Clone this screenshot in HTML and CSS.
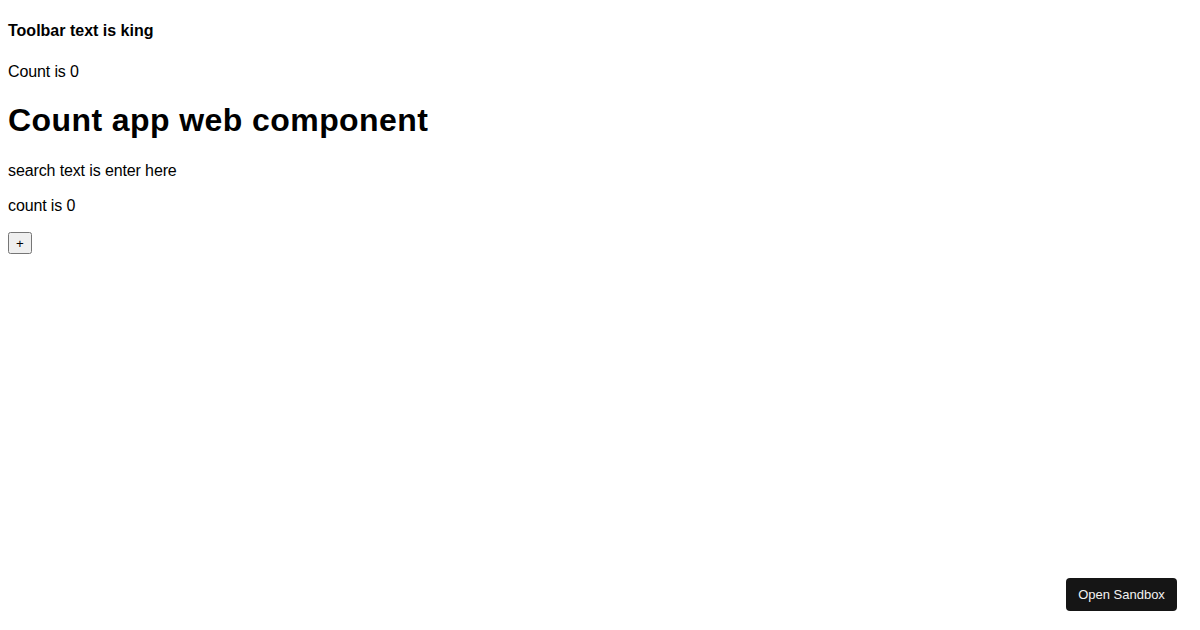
FILE: index.html
```html
<!DOCTYPE html>
<html>
<head>
<meta charset="utf-8">
<link rel="stylesheet" href="styles.css">
</head>
<body>
<div class="page">
  <h4 class="toolbar">Toolbar text is king</h4>
  <p class="line count-top">Count is 0</p>
  <div class="app">
    <h1 class="title">Count app web component</h1>
    <p class="line search">search text is enter here</p>
    <p class="line count">count is 0</p>
    <button class="inc">+</button>
  </div>
</div>
<a class="sandbox">Open Sandbox</a>
</body>
</html>
```
FILE: styles.css
```css
html, body {
  margin: 0;
  padding: 0;
  background: #fff;
}
body {
  font-family: "Liberation Sans", Arial, sans-serif;
  color: #000;
}
.page {
  display: flex;
  flex-direction: column;
  align-items: flex-start;
  padding: 22px 8px 0;
}
.app {
  display: flex;
  flex-direction: column;
  align-items: flex-start;
}
.toolbar {
  font-size: 16px;
  font-weight: bold;
  margin: 0;
}
.line {
  font-size: 16px;
  letter-spacing: -0.12px;
  margin: 0;
}
.count-top {
  margin-top: 22.5px;
}
.title {
  font-size: 32px;
  font-weight: bold;
  letter-spacing: 0.42px;
  margin: 21.4px 0 0;
}
.search {
  margin-top: 23.6px;
}
.count {
  margin-top: 16.6px;
}
.inc {
  font-family: "Liberation Sans", Arial, sans-serif;
  font-size: 13.33px;
  margin-top: 17px;
  height: 22px;
}
.sandbox {
  position: fixed;
  right: 23px;
  bottom: 19px;
  width: 111px;
  height: 33px;
  box-sizing: border-box;
  display: flex;
  align-items: center;
  justify-content: center;
  background: #151515;
  color: #f2f2f2;
  border-radius: 4px;
  font-family: "Liberation Sans", Arial, sans-serif;
  font-size: 13px;
}
```
